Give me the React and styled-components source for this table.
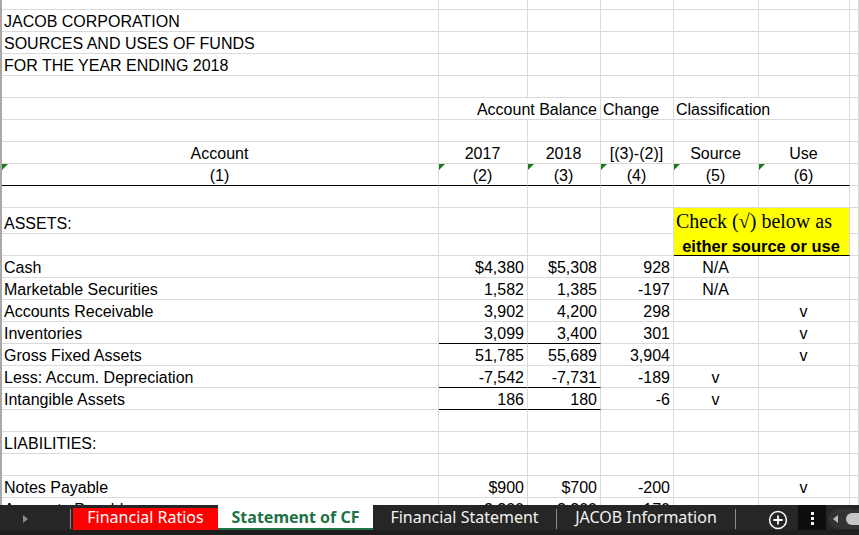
import styled, { createGlobalStyle, css } from "styled-components";

const GRID = "#dadada";

const GlobalStyle = createGlobalStyle`
  html, body {
    margin: 0;
    padding: 0;
    background: #fff;
  }
  body {
    font-family: "Liberation Sans", Arial, sans-serif;
  }
`;

const Screen = styled.div`
  width: 859px;
  height: 535px;
  display: flex;
  flex-direction: column;
  overflow: hidden;
  background: #fff;
`;

const Sheet = styled.div`
  flex: 1;
  min-height: 0;
  overflow: hidden;
  border-left: 2px solid #a8a8a8;
`;

const Row = styled.div`
  display: grid;
  grid-template-columns: 437px 89px 73px 73px 85px 91px 1fr;
  height: ${p => p.$h || 22}px;
`;

const Cell = styled.div`
  grid-column: span ${p => p.$span || 1};
  position: relative;
  box-sizing: border-box;
  min-width: 0;
  display: flex;
  align-items: flex-end;
  justify-content: ${p => ({ left: "flex-start", center: "center", right: "flex-end" }[p.$align || "left"])};
  padding: 0 3px 0 2px;
  border-right: 1px solid ${GRID};
  border-bottom: 1px solid ${p => (p.$rule ? "#000" : p.$fill || GRID)};
  background: ${p => p.$fill || "transparent"};
  color: #000;
  font-family: ${p => (p.$serif ? '"Liberation Serif", "Times New Roman", serif' : '"Liberation Sans", Arial, sans-serif')};
  font-size: ${p => p.$size || 16}px;
  font-weight: ${p => (p.$bold ? 700 : 400)};
  line-height: ${p => (p.$serif ? 23 : 18)}px;
  white-space: nowrap;
  overflow: hidden;

  ${p => p.$mark && css`
    &::before {
      content: "";
      position: absolute;
      top: 0;
      left: 0;
      border-style: solid;
      border-width: 6px 6px 0 0;
      border-color: #177e17 transparent transparent transparent;
    }
  `}
`;

const TabBar = styled.div`
  height: 30px;
  box-sizing: border-box;
  display: flex;
  background: #262626;
  border-bottom: 5px solid #1e1e1e;
  font-family: "Noto Sans", "Open Sans", sans-serif;
  font-size: 16px;
`;

const NavZone = styled.div`
  width: 70px;
  display: flex;
  align-items: center;
  padding-left: 23px;
  box-sizing: border-box;
`;

const NavArrow = styled.span`
  width: 0;
  height: 0;
  margin-top: 3px;
  border-style: solid;
  border-width: 4px 0 4px 5px;
  border-color: transparent transparent transparent #8c8c8c;
`;

const Divider = styled.span`
  width: 1px;
  height: 20px;
  margin-top: 4px;
  background: ${p => p.$tone || "#8a8a8a"};
`;

const Tab = styled.div`
  width: ${p => p.$w}px;
  margin-left: ${p => p.$gap || 0}px;
  box-sizing: border-box;
  display: flex;
  justify-content: center;
  align-items: center;
  padding-bottom: 2px;
  white-space: nowrap;
  color: #f2f2f2;

  ${p => p.$variant === "red" && css`
    background: #ff0000;
    color: #fff;
    box-shadow: inset 0 3px 0 #262626;
  `}

  ${p => p.$variant === "active" && css`
    background: #fff;
    color: #1e7145;
    font-weight: 700;
    border-bottom: 2px solid #217346;
    padding-bottom: 0;
  `}
`;

const AddZone = styled.div`
  width: 62px;
  display: flex;
  align-items: flex-start;
  padding: 5px 0 0 32px;
  box-sizing: border-box;
`;

const MoreZone = styled.div`
  width: 28px;
  background: #0e0e0e;
  display: flex;
  flex-direction: column;
  align-items: center;
  padding-top: 7px;
  box-sizing: border-box;
  gap: 2px;
`;

const Dot = styled.span`
  width: 3px;
  height: 3px;
  background: #f0f0f0;
`;

const Scroller = styled.div`
  flex: 1;
  margin: 4px 0 0 2px;
  height: 20px;
  border-radius: 10px 0 0 10px;
  background: #333;
  display: flex;
  align-items: center;
  padding-left: 5px;
  gap: 8px;
`;

const ScrollArrow = styled.span`
  width: 0;
  height: 0;
  border-style: solid;
  border-width: 4px 5px 4px 0;
  border-color: transparent #bdbdbd transparent transparent;
`;

const Thumb = styled.span`
  flex: 1;
  height: 12px;
  border-radius: 6px 0 0 6px;
  background: #c6c6c6;
`;

const assets = [
  { name: "Cash", a: "$4,380", b: "$5,308", c: "928", src: "N/A", use: "" },
  { name: "Marketable Securities", a: "1,582", b: "1,385", c: "-197", src: "N/A", use: "" },
  { name: "Accounts Receivable", a: "3,902", b: "4,200", c: "298", src: "", use: "v" },
  { name: "Inventories", a: "3,099", b: "3,400", c: "301", src: "", use: "v", rule: true },
  { name: "Gross Fixed Assets", a: "51,785", b: "55,689", c: "3,904", src: "", use: "v" },
  { name: "Less: Accum. Depreciation", a: "-7,542", b: "-7,731", c: "-189", src: "v", use: "", rule: true },
  { name: "Intangible Assets", a: "186", b: "180", c: "-6", src: "v", use: "", rule: true },
];

const liabilities = [
  { name: "Notes Payable", a: "$900", b: "$700", c: "-200", src: "", use: "v" },
  { name: "Accounts Payable", a: "2,300", b: "2,300", c: "-170", src: "", use: "" },
];

function Blank({ h }) {
  return (
    <Row $h={h}>
      <Cell /><Cell /><Cell /><Cell /><Cell /><Cell /><Cell />
    </Row>
  );
}

function Label({ text, h }) {
  return (
    <Row $h={h}>
      <Cell>{text}</Cell><Cell /><Cell /><Cell /><Cell /><Cell /><Cell />
    </Row>
  );
}

function DataRow({ row }) {
  return (
    <Row>
      <Cell>{row.name}</Cell>
      <Cell $align="right" $rule={row.rule}>{row.a}</Cell>
      <Cell $align="right" $rule={row.rule}>{row.b}</Cell>
      <Cell $align="right">{row.c}</Cell>
      <Cell $align="center">{row.src}</Cell>
      <Cell $align="center">{row.use}</Cell>
      <Cell />
    </Row>
  );
}

function PlusIcon() {
  return (
    <svg width="20" height="20" viewBox="0 0 20 20">
      <circle cx="10" cy="10" r="8.4" fill="none" stroke="#fff" strokeWidth="1.5" />
      <path d="M10 5.4v9.2M5.4 10h9.2" stroke="#fff" strokeWidth="1.8" />
    </svg>
  );
}

export default function App() {
  return (
    <>
      <GlobalStyle />
      <Screen>
        <Sheet>
          <Blank h={10} />
          <Label text="JACOB CORPORATION" />
          <Label text="SOURCES AND USES OF FUNDS" />
          <Label text="FOR THE YEAR ENDING 2018" />
          <Blank />
          <Row>
            <Cell />
            <Cell $span={2} $align="right">Account Balance</Cell>
            <Cell>Change</Cell>
            <Cell $span={2}>Classification</Cell>
            <Cell />
          </Row>
          <Blank />
          <Row>
            <Cell $align="center">Account</Cell>
            <Cell $align="center">2017</Cell>
            <Cell $align="center">2018</Cell>
            <Cell $align="center">[(3)-(2)]</Cell>
            <Cell $align="center">Source</Cell>
            <Cell $align="center">Use</Cell>
            <Cell />
          </Row>
          <Row>
            {["(1)", "(2)", "(3)", "(4)", "(5)", "(6)"].map(t => (
              <Cell key={t} $align="center" $mark $rule>{t}</Cell>
            ))}
            <Cell />
          </Row>
          <Blank />
          <Row $h={26}>
            <Cell>ASSETS:</Cell>
            <Cell /><Cell /><Cell />
            <Cell $span={2} $fill="#ffff00" $serif $size={20}>Check (√) below as</Cell>
            <Cell />
          </Row>
          <Row>
            <Cell /><Cell /><Cell /><Cell />
            <Cell $span={2} $fill="#ffff00" $align="center" $bold $size={16.5} $rule>either source or use</Cell>
            <Cell />
          </Row>
          {assets.map(r => <DataRow key={r.name} row={r} />)}
          <Blank />
          <Label text="LIABILITIES:" />
          <Blank />
          {liabilities.map(r => <DataRow key={r.name} row={r} />)}
        </Sheet>
        <TabBar>
          <NavZone><NavArrow /></NavZone>
          <Divider />
          <Tab $variant="red" $w={145} $gap={2}>Financial Ratios</Tab>
          <Tab $variant="active" $w={155}>Statement of CF</Tab>
          <Tab $w={183}>Financial Statement</Tab>
          <Divider />
          <Tab $w={178}>JACOB Information</Tab>
          <Divider />
          <AddZone><PlusIcon /></AddZone>
          <MoreZone><Dot /><Dot /><Dot /></MoreZone>
          <Scroller><ScrollArrow /><Thumb /></Scroller>
        </TabBar>
      </Screen>
    </>
  );
}
